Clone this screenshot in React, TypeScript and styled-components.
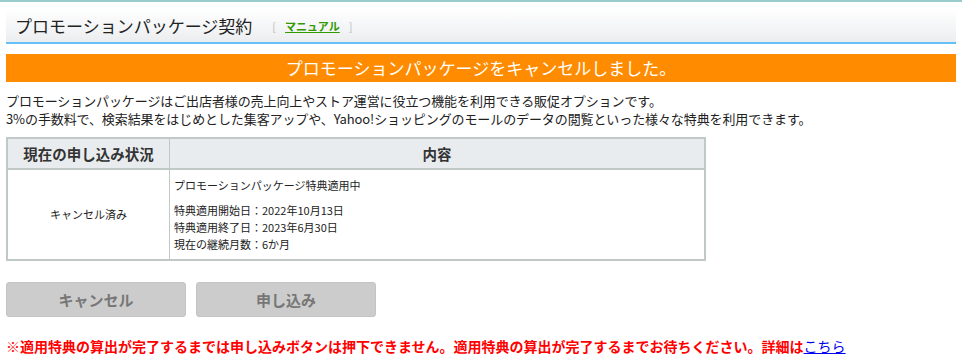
import React from 'react';
import styled, { createGlobalStyle } from 'styled-components';

const GlobalStyle = createGlobalStyle`
  body {
    margin: 0;
    background: #fff;
    font-family: "Noto Sans CJK JP", "Liberation Sans", sans-serif;
    color: #333;
  }
`;

const Page = styled.div`
  border-top: 2px solid #99cccc;
  padding: 7px 6px 0;
`;

const TitleBar = styled.div`
  display: flex;
  align-items: center;
  height: 33px;
  padding-left: 9px;
  background: linear-gradient(#ffffff, #ebedef);
  border-bottom: 2px solid #66c0f8;
`;

const Title = styled.h1`
  margin: 0;
  font-size: 17px;
  font-weight: normal;
  color: #222;
`;

const Manual = styled.span`
  margin-left: 20px;
  font-size: 11px;
  color: #bbb;

  a {
    margin: 0 9px;
    color: #339900;
    font-weight: bold;
    text-decoration: underline;
  }
`;

const Notice = styled.div`
  margin-top: 10px;
  height: 28px;
  background: #ff8c00;
  color: #fff;
  font-size: 17px;
  line-height: 28px;
  text-align: center;
`;

const Lead = styled.p`
  margin: 10px 0 9px;
  font-size: 13px;
  line-height: 18px;
  letter-spacing: -0.1px;
  color: #222;
`;

const Table = styled.table`
  width: 700px;
  border-collapse: collapse;
  border: 2px solid #c0c8c8;
  font-size: 11px;
`;

const Th = styled.th<{ $w?: number }>`
  width: ${p => (p.$w ? `${p.$w}px` : 'auto')};
  height: 29px;
  padding: 0;
  background: #e9ecee;
  border-bottom: 2px solid #c0c8c8;
  border-left: 1px solid #c0c8c8;
  font-size: 14.5px;
  font-weight: bold;
  color: #333;
`;

const Td = styled.td<{ $center?: boolean }>`
  height: 89px;
  padding: 0 4px;
  border-left: 1px solid #c0c8c8;
  text-align: ${p => (p.$center ? 'center' : 'left')};
  vertical-align: middle;
  color: #222;
  line-height: 17px;
`;

const Status = styled.div`
  margin-bottom: 8px;
`;

const Buttons = styled.div`
  display: flex;
  gap: 10px;
  margin-top: 21px;
`;

const Button = styled.button`
  width: 180px;
  height: 35px;
  border: 1px solid #c4c4c4;
  border-radius: 3px;
  background: #cccccc;
  color: #777;
  font-family: inherit;
  font-size: 15px;
  font-weight: bold;
`;

const Warning = styled.p`
  margin: 19px 0 0;
  font-size: 14px;
  font-weight: bold;
  color: #ff0000;

  a {
    color: #0000ee;
    font-weight: normal;
    text-decoration: underline;
  }
`;

export default function App() {
  return (
    <>
      <GlobalStyle />
      <Page>
        <TitleBar>
          <Title>プロモーションパッケージ契約</Title>
          <Manual>
            [<a href="#">マニュアル</a>]
          </Manual>
        </TitleBar>

        <Notice>プロモーションパッケージをキャンセルしました。</Notice>

        <Lead>
          プロモーションパッケージはご出店者様の売上向上やストア運営に役立つ機能を利用できる販促オプションです。
          <br />
          3%の手数料で、検索結果をはじめとした集客アップや、Yahoo!ショッピングのモールのデータの閲覧といった様々な特典を利用できます。
        </Lead>

        <Table>
          <thead>
            <tr>
              <Th $w={161}>現在の申し込み状況</Th>
              <Th>内容</Th>
            </tr>
          </thead>
          <tbody>
            <tr>
              <Td $center>キャンセル済み</Td>
              <Td>
                <Status>プロモーションパッケージ特典適用中</Status>
                特典適用開始日：2022年10月13日
                <br />
                特典適用終了日：2023年6月30日
                <br />
                現在の継続月数：6か月
              </Td>
            </tr>
          </tbody>
        </Table>

        <Buttons>
          <Button disabled>キャンセル</Button>
          <Button disabled>申し込み</Button>
        </Buttons>

        <Warning>
          ※適用特典の算出が完了するまでは申し込みボタンは押下できません。適用特典の算出が完了するまでお待ちください。詳細は
          <a href="#">こちら</a>
        </Warning>
      </Page>
    </>
  );
}
